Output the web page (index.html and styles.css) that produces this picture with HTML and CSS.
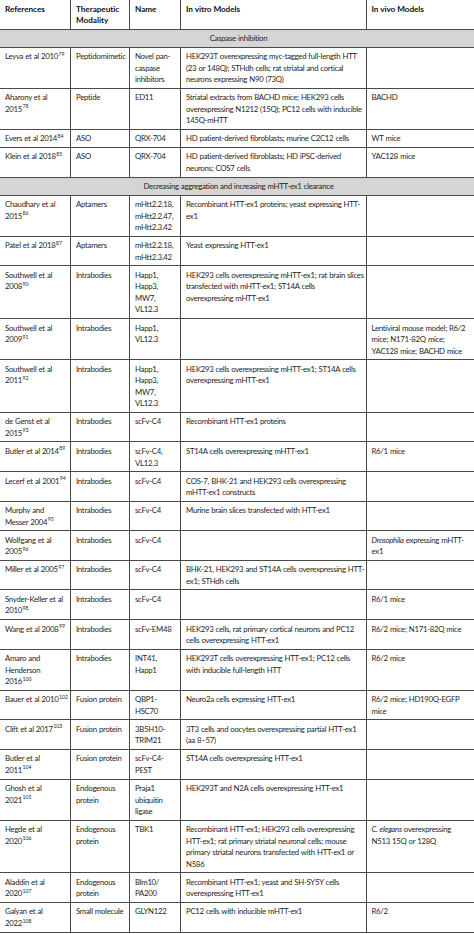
FILE: index.html
```html
<!DOCTYPE html>
<html lang="en">
<head>
<meta charset="utf-8">
<title>Therapeutic strategies table</title>
<link rel="stylesheet" href="styles.css">
</head>
<body>
<table class="tbl">
  <colgroup>
    <col class="c1"><col class="c2"><col class="c3"><col class="c4"><col class="c5">
  </colgroup>
  <thead>
    <tr class="head">
      <th>References</th>
      <th>Therapeutic<br>Modality</th>
      <th>Name</th>
      <th>In vitro Models</th>
      <th>In vivo Models</th>
    </tr>
  </thead>
  <tbody>
    <tr class="section"><td colspan="5">Caspase inhibition</td></tr>
    <tr>
      <td>Leyva et al 2010<sup>79</sup></td>
      <td>Peptidomimetic</td>
      <td>Novel pan-<br>caspase<br>inhibitors</td>
      <td>HEK293T overexpressing myc-tagged full-length HTT<br>(23 or 148Q); STHdh cells; rat striatal and cortical<br>neurons expressing N90 (73Q)</td>
      <td></td>
    </tr>
    <tr>
      <td>Aharony et al<br>2015<sup>78</sup></td>
      <td>Peptide</td>
      <td>ED11</td>
      <td>Striatal extracts from BACHD mice; HEK293 cells<br>overexpressing N1212 (15Q); PC12 cells with inducible<br>145Q-mHTT</td>
      <td>BACHD</td>
    </tr>
    <tr>
      <td>Evers et al 2014<sup>84</sup></td>
      <td>ASO</td>
      <td>QRX-704</td>
      <td>HD patient-derived fibroblasts; murine C2C12 cells</td>
      <td>WT mice</td>
    </tr>
    <tr>
      <td>Klein et al 2018<sup>85</sup></td>
      <td>ASO</td>
      <td>QRX-704</td>
      <td>HD patient-derived fibroblasts; HD iPSC-derived<br>neurons; COS7 cells</td>
      <td>YAC128 mice</td>
    </tr>
    <tr class="section"><td colspan="5">Decreasing aggregation and increasing mHTT-ex1 clearance</td></tr>
    <tr>
      <td>Chaudhary et al<br>2015<sup>86</sup></td>
      <td>Aptamers</td>
      <td>mHtt2.2.18,<br>mHtt2.2.47,<br>mHtt2.3.42</td>
      <td>Recombinant HTT-ex1 proteins; yeast expressing HTT-<br>ex1</td>
      <td></td>
    </tr>
    <tr>
      <td>Patel et al 2018<sup>87</sup></td>
      <td>Aptamers</td>
      <td>mHtt2.2.18,<br>mHtt2.3.42</td>
      <td>Yeast expressing HTT-ex1</td>
      <td></td>
    </tr>
    <tr>
      <td>Southwell et al<br>2008<sup>90</sup></td>
      <td>Intrabodies</td>
      <td>Happ1,<br>Happ3,<br>MW7,<br>VL12.3</td>
      <td>HEK293 cells overexpressing mHTT-ex1; rat brain slices<br>transfected with mHTT-ex1; ST14A cells<br>overexpressing mHTT-ex1</td>
      <td></td>
    </tr>
    <tr>
      <td>Southwell et al<br>2009<sup>91</sup></td>
      <td>Intrabodies</td>
      <td>Happ1,<br>VL12.3</td>
      <td></td>
      <td>Lentiviral mouse model; R6/2<br>mice; N171-82Q mice;<br>YAC128 mice; BACHD mice</td>
    </tr>
    <tr>
      <td>Southwell et al<br>2011<sup>92</sup></td>
      <td>Intrabodies</td>
      <td>Happ1,<br>Happ3,<br>MW7,<br>VL12.3</td>
      <td>HEK293 cells overexpressing mHTT-ex1; ST14A cells<br>overexpressing mHTT-ex1</td>
      <td></td>
    </tr>
    <tr>
      <td>de Genst et al<br>2015<sup>93</sup></td>
      <td>Intrabodies</td>
      <td>scFv-C4</td>
      <td>Recombinant HTT-ex1 proteins</td>
      <td></td>
    </tr>
    <tr>
      <td>Butler et al 2014<sup>89</sup></td>
      <td>Intrabodies</td>
      <td>scFv-C4,<br>VL12.3</td>
      <td>ST14A cells overexpressing mHTT-ex1</td>
      <td>R6/1 mice</td>
    </tr>
    <tr>
      <td>Lecerf et al 2001<sup>94</sup></td>
      <td>Intrabodies</td>
      <td>scFv-C4</td>
      <td>COS-7, BHK-21 and HEK293 cells overexpressing<br>mHTT-ex1 constructs</td>
      <td></td>
    </tr>
    <tr>
      <td>Murphy and<br>Messer 2004<sup>95</sup></td>
      <td>Intrabodies</td>
      <td>scFv-C4</td>
      <td>Murine brain slices transfected with HTT-ex1</td>
      <td></td>
    </tr>
    <tr>
      <td>Wolfgang et al<br>2005<sup>96</sup></td>
      <td>Intrabodies</td>
      <td>scFv-C4</td>
      <td></td>
      <td><i>Drosophila</i> expressing mHTT-<br>ex1</td>
    </tr>
    <tr>
      <td>Miller et al 2005<sup>97</sup></td>
      <td>Intrabodies</td>
      <td>scFv-C4</td>
      <td>BHK-21, HEK293 and ST14A cells overexpressing HTT-<br>ex1; STHdh cells</td>
      <td></td>
    </tr>
    <tr>
      <td>Snyder-Keller et al<br>2010<sup>98</sup></td>
      <td>Intrabodies</td>
      <td>scFv-C4</td>
      <td></td>
      <td>R6/1 mice</td>
    </tr>
    <tr>
      <td>Wang et al 2008<sup>99</sup></td>
      <td>Intrabodies</td>
      <td>scFv-EM48</td>
      <td>HEK293 cells, rat primary cortical neurons and PC12<br>cells overexpressing HTT-ex1</td>
      <td>R6/2 mice; N171-82Q mice</td>
    </tr>
    <tr>
      <td>Amaro and<br>Henderson<br>2016<sup>100</sup></td>
      <td>Intrabodies</td>
      <td>INT41,<br>Happ1</td>
      <td>HEK293T cells overexpressing HTT-ex1; PC12 cells<br>with inducible full-length HTT</td>
      <td>R6/2 mice</td>
    </tr>
    <tr>
      <td>Bauer et al 2010<sup>102</sup></td>
      <td>Fusion protein</td>
      <td>QBP1-<br>HSC70</td>
      <td>Neuro2a cells expressing HTT-ex1</td>
      <td>R6/2 mice; HD190Q-EGFP<br>mice</td>
    </tr>
    <tr>
      <td>Clift et al 2017<sup>103</sup></td>
      <td>Fusion protein</td>
      <td>3B5H10-<br>TRIM21</td>
      <td>3T3 cells and oocytes overexpressing partial HTT-ex1<br>(aa 8–57)</td>
      <td></td>
    </tr>
    <tr>
      <td>Butler et al<br>2011<sup>104</sup></td>
      <td>Fusion protein</td>
      <td>scFv-C4-<br>PEST</td>
      <td>ST14A cells overexpressing HTT-ex1</td>
      <td></td>
    </tr>
    <tr>
      <td>Ghosh et al<br>2021<sup>105</sup></td>
      <td>Endogenous<br>protein</td>
      <td>Praja1<br>ubiquitin<br>ligase</td>
      <td>HEK293T and N2A cells overexpressing HTT-ex1</td>
      <td></td>
    </tr>
    <tr>
      <td>Hegde et al<br>2020<sup>106</sup></td>
      <td>Endogenous<br>protein</td>
      <td>TBK1</td>
      <td>Recombinant HTT-ex1; HEK293 cells overexpressing<br>HTT-ex1; rat primary striatal neuronal cells; mouse<br>primary striatal neurons transfected with HTT-ex1 or<br>N586</td>
      <td><i>C. elegans</i> overexpressing<br>N513 15Q or 128Q</td>
    </tr>
    <tr>
      <td>Aladdin et al<br>2020<sup>107</sup></td>
      <td>Endogenous<br>protein</td>
      <td>Blm10/<br>PA200</td>
      <td>Recombinant HTT-ex1; yeast and SH-SY5Y cells<br>overexpressing HTT-ex1</td>
      <td></td>
    </tr>
    <tr>
      <td>Galyan et al<br>2022<sup>108</sup></td>
      <td>Small molecule</td>
      <td>GLYN122</td>
      <td>PC12 cells with inducible mHTT-ex1</td>
      <td>R6/2</td>
    </tr>
  </tbody>
</table>
</body>
</html>
```
FILE: styles.css
```css
html, body {
  margin: 0;
  padding: 0;
  background: #ffffff;
}

body {
  font-family: Lato, "Open Sans", sans-serif;
  font-size: 7.8px;
  letter-spacing: -0.28px;
  word-spacing: 0.4px;
  color: #1f1f1f;
  overflow: hidden;
}

.tbl {
  width: 474px;
  table-layout: fixed;
  border-collapse: collapse;
  border-spacing: 0;
}

.c1 { width: 70.5px; }
.c2 { width: 59px; }
.c3 { width: 51px; }
.c4 { width: 185.5px; }
.c5 { width: 108px; }

.tbl th,
.tbl td {
  text-align: left;
  vertical-align: top;
  padding: 3.5px 2px 2px 5px;
  line-height: 11.55px;
  white-space: nowrap;
  overflow: hidden;
  border-bottom: 1px solid #4a4a4a;
  border-left: 1px solid #4a4a4a;
}

.tbl th:first-child,
.tbl td:first-child {
  border-left: none;
}

.tbl th {
  font-weight: 700;
  font-size: 8.2px;
  letter-spacing: -0.05px;
  word-spacing: 0;
  color: #111;
}

.tbl .section td {
  background: #d5d5d5;
  text-align: center;
  border-left: none;
  border-top: 1px solid #4a4a4a;
}

.tbl sup {
  font-size: 5.2px;
  letter-spacing: 0;
  line-height: 0;
  vertical-align: 3.5px;
  padding-left: 0.5px;
}

.tbl i {
  font-style: italic;
}
```
